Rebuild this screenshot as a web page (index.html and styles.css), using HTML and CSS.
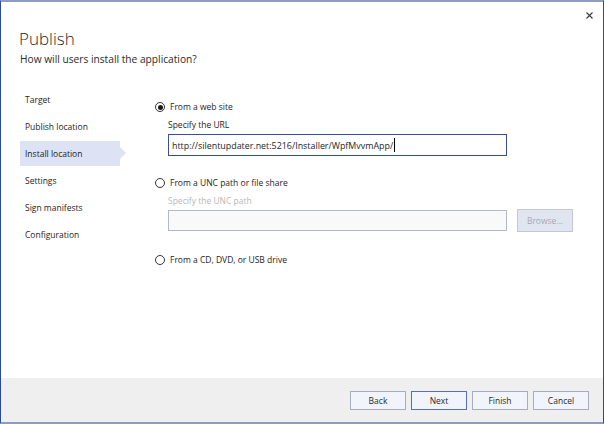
FILE: index.html
```html
<!DOCTYPE html>
<html lang="en">
<head>
    <meta charset="UTF-8">
    <title>Publish</title>
    <link rel="stylesheet" href="styles.css">
</head>
<body>
    <div class="window">
        <div class="header">
            <div class="titles">
                <h1>Publish</h1>
                <p class="subtitle">How will users install the application?</p>
            </div>
            <button class="close-btn" title="Close">
                <svg width="7" height="7" viewBox="0 0 7 7">
                    <path d="M0.5 0.5 L6.5 6.5 M6.5 0.5 L0.5 6.5" stroke="#3a3a3a" stroke-width="1.1" fill="none"/>
                </svg>
            </button>
        </div>

        <div class="main">
            <ul class="nav">
                <li>Target</li>
                <li>Publish location</li>
                <li class="active">Install location</li>
                <li>Settings</li>
                <li>Sign manifests</li>
                <li>Configuration</li>
            </ul>

            <div class="content">
                <div class="option">
                    <span class="radio checked"></span>
                    <span>From a web site</span>
                </div>
                <div class="field-label">Specify the URL</div>
                <div class="textbox focused">
                    <span>http://silentupdater.net:5216/Installer/WpfMvvmApp/</span><span class="caret"></span>
                </div>

                <div class="option second">
                    <span class="radio"></span>
                    <span>From a UNC path or file share</span>
                </div>
                <div class="field-label disabled">Specify the UNC path</div>
                <div class="path-row">
                    <div class="textbox disabled"></div>
                    <button class="browse-btn" disabled>Browse...</button>
                </div>

                <div class="option third">
                    <span class="radio"></span>
                    <span>From a CD, DVD, or USB drive</span>
                </div>
            </div>
        </div>

        <div class="footer">
            <button class="btn">Back</button>
            <button class="btn default">Next</button>
            <button class="btn">Finish</button>
            <button class="btn">Cancel</button>
        </div>
    </div>
</body>
</html>
```
FILE: styles.css
```css
body {
    margin: 0;
    background: #fff;
    font-family: "Open Sans", "Noto Sans", sans-serif;
    font-size: 8.5px;
    color: #1e1e1e;
}
.window {
    width: 604px;
    height: 424px;
    box-sizing: border-box;
    border-top: 2px solid #8e9cc4;
    border-bottom: 2px solid #8e9cc4;
    border-left: 1px solid #2a4a96;
    border-right: 1px solid #2a4a96;
    display: flex;
    flex-direction: column;
}
.header {
    display: flex;
    justify-content: space-between;
    align-items: flex-start;
    padding-left: 18px;
}
.titles {
    padding-top: 26px;
}
.header h1 {
    margin: 0;
    font-size: 17px;
    font-weight: 300;
    line-height: 22px;
    color: #1e1e1e;
}
.subtitle {
    margin: 2px 0 0 1px;
    font-size: 10.2px;
    line-height: 14px;
    color: #2b2b2b;
}
.close-btn {
    margin: 10px 10px 0 0;
    padding: 0;
    width: 7px;
    height: 7px;
    border: none;
    background: none;
    display: flex;
}
.main {
    flex: 1;
    display: flex;
    margin-top: 21px;
}
.nav {
    list-style: none;
    margin: 0 0 0 19px;
    padding: 0;
    width: 100px;
}
.nav li {
    position: relative;
    height: 25px;
    line-height: 25px;
    padding-left: 5px;
    margin-bottom: 2px;
    white-space: nowrap;
}
.nav li.active {
    background: #dde2f5;
}
.nav li.active::after {
    content: "";
    position: absolute;
    top: 6px;
    right: -6px;
    border-top: 6.5px solid transparent;
    border-bottom: 6.5px solid transparent;
    border-left: 6px solid #dde2f5;
}
.content {
    margin-left: 35px;
    padding-top: 12px;
}
.option {
    display: flex;
    align-items: center;
    height: 16px;
    line-height: 16px;
}
.option.second {
    margin-top: 19px;
}
.option.third {
    margin-top: 20px;
}
.radio {
    width: 10px;
    height: 10px;
    box-sizing: border-box;
    border: 1px solid #333;
    border-radius: 50%;
    margin-right: 5px;
    display: flex;
    align-items: center;
    justify-content: center;
}
.radio.checked::after {
    content: "";
    width: 5px;
    height: 5px;
    border-radius: 50%;
    background: #1a1a1a;
}
.field-label {
    margin: 3px 0 2px 13px;
    line-height: 14px;
}
.field-label.disabled {
    color: #b8b8b8;
    margin-bottom: 1px;
}
.textbox {
    margin-left: 13px;
    width: 339px;
    height: 22px;
    box-sizing: border-box;
    border: 1px solid #a9b0c4;
    background: #fff;
    display: flex;
    align-items: center;
    padding-left: 3px;
    font-size: 8.9px;
    color: #1e1e1e;
    white-space: nowrap;
}
.textbox.focused {
    border-color: #3a4c9c;
}
.textbox.disabled {
    height: 21px;
    background: #f9f9fa;
    border-color: #b3b8c7;
}
.caret {
    display: inline-block;
    width: 1px;
    height: 14px;
    background: #000;
    margin-left: 1px;
}
.path-row {
    display: flex;
    align-items: center;
}
.browse-btn {
    margin-left: 10px;
    width: 56px;
    height: 23px;
    border: 1px solid #c3c8d8;
    background: #e1e5f0;
    color: #a5a8b2;
    font-family: inherit;
    font-size: 8.5px;
    padding: 0;
}
.footer {
    height: 44px;
    flex-shrink: 0;
    background: #efeff0;
    display: flex;
    justify-content: flex-end;
    align-items: flex-start;
    gap: 5px;
    padding: 13px 14px 0 0;
    box-sizing: border-box;
}
.btn {
    width: 56px;
    height: 19px;
    padding: 0;
    border: 1px solid #a6adbe;
    background: #f2f4fb;
    color: #2a2a2a;
    font-family: inherit;
    font-size: 8.5px;
}
.btn.default {
    border-color: #5570b5;
}
```
